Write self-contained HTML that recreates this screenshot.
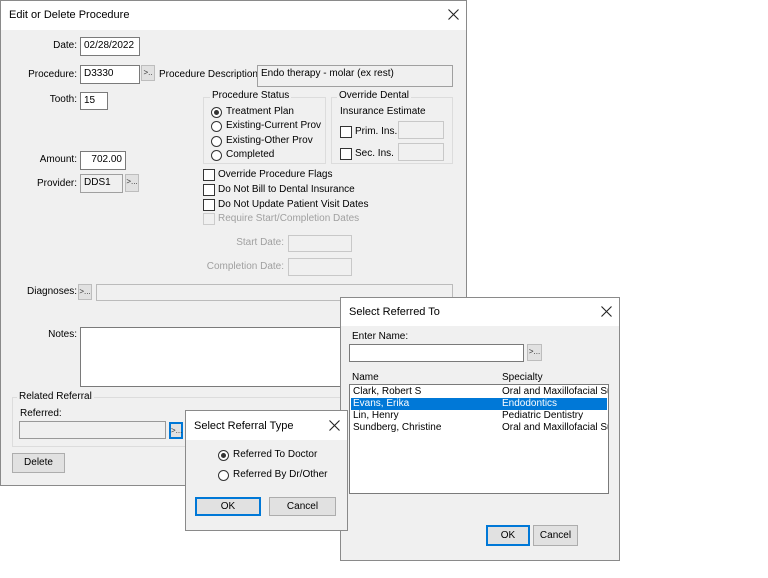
<!DOCTYPE html>
<html><head><meta charset="utf-8"><style>
*{box-sizing:border-box;margin:0;padding:0}
body{width:768px;height:578px;background:#fff;position:relative;overflow:hidden;font-family:"Liberation Sans",sans-serif;font-size:10px;color:#000}
.a{position:absolute;white-space:nowrap}
.win{position:absolute;background:#f0f0f0;border:1px solid #8a8a8a}
.tb{position:absolute;left:0;top:0;right:0;background:#fff}
.tt{position:absolute;font-size:11px}
.x{position:absolute;width:11px;height:11px}
.in{position:absolute;background:#fff;border:1px solid #7a7a7a;padding:2px 3px;line-height:12px}
.dis{position:absolute;background:#f0f0f0;border:1px solid #c8c8c8}
.bt{position:absolute;background:#e1e1e1;border:1px solid #adadadb0;font-size:8px;line-height:13px;text-align:center;color:#333}
.btn{position:absolute;background:#e1e1e1;border:1px solid #adadad;text-align:center;font-size:10px}
.blue{border:2px solid #0078d7}
.grp{position:absolute;border:1px solid #dcdcdc}
.gt{position:absolute;background:#f0f0f0;padding:0 2px;white-space:nowrap}
.r{position:absolute;width:11px;height:11px;border-radius:50%;border:1px solid #333;background:#fff}
.r.on::after{content:"";position:absolute;left:2px;top:2px;width:5px;height:5px;border-radius:50%;background:#333}
.c{position:absolute;width:12px;height:12px;border:1px solid #333;background:#fff}
.gray{color:#a0a0a0}
</style></head><body>

<!-- main window -->
<div class="win" style="left:0;top:0;width:467px;height:486px">
 <div class="tb" style="height:29px"></div>
 <div class="tt" style="left:8px;top:8px">Edit or Delete Procedure</div>
 <svg class="x" style="left:447px;top:8px" viewBox="0 0 11 11"><path d="M0.5 0.5L10.5 10.5M10.5 0.5L0.5 10.5" stroke="#222" stroke-width="1.1"/></svg>
</div>
<div class="a" style="right:691px;top:40px">Date:</div>
<div class="in" style="left:80px;top:37px;width:60px;height:19px">02/28/2022</div>
<div class="a" style="right:691px;top:69px">Procedure:</div>
<div class="in" style="left:80px;top:65px;width:60px;height:19px">D3330</div>
<div class="bt" style="left:141px;top:65px;width:14px;height:16px">&gt;..</div>
<div class="a" style="left:159px;top:69px">Procedure Description</div>
<div class="in" style="left:257px;top:65px;width:196px;height:22px;background:#f0f0f0;border-color:#a0a0a0">Endo therapy - molar (ex rest)</div>
<div class="a" style="right:691px;top:94px">Tooth:</div>
<div class="in" style="left:80px;top:92px;width:28px;height:18px">15</div>
<div class="a" style="right:691px;top:154px">Amount:</div>
<div class="in" style="left:80px;top:151px;width:46px;height:19px;text-align:right">702.00</div>
<div class="a" style="right:691px;top:178px">Provider:</div>
<div class="in" style="left:80px;top:174px;width:43px;height:19px;background:#f0f0f0;border-color:#a0a0a0">DDS1</div>
<div class="bt" style="left:125px;top:174px;width:14px;height:18px">&gt;...</div>

<div class="grp" style="left:203px;top:97px;width:123px;height:67px"></div>
<div class="gt" style="left:210px;top:90px">Procedure Status</div>
<div class="r on" style="left:211px;top:107px"></div><div class="a" style="left:226px;top:106px">Treatment Plan</div>
<div class="r" style="left:211px;top:121px"></div><div class="a" style="left:226px;top:120px">Existing-Current Prov</div>
<div class="r" style="left:211px;top:136px"></div><div class="a" style="left:226px;top:135px">Existing-Other Prov</div>
<div class="r" style="left:211px;top:150px"></div><div class="a" style="left:226px;top:149px">Completed</div>

<div class="grp" style="left:331px;top:97px;width:122px;height:67px"></div>
<div class="gt" style="left:337px;top:90px">Override Dental</div>
<div class="a" style="left:340px;top:106px">Insurance Estimate</div>
<div class="c" style="left:340px;top:126px"></div><div class="a" style="left:355px;top:126px">Prim. Ins.</div>
<div class="dis" style="left:398px;top:121px;width:46px;height:18px"></div>
<div class="c" style="left:340px;top:148px"></div><div class="a" style="left:355px;top:148px">Sec. Ins.</div>
<div class="dis" style="left:398px;top:143px;width:46px;height:18px"></div>

<div class="c" style="left:203px;top:169px"></div><div class="a" style="left:218px;top:169px">Override Procedure Flags</div>
<div class="c" style="left:203px;top:184px"></div><div class="a" style="left:218px;top:184px">Do Not Bill to Dental Insurance</div>
<div class="c" style="left:203px;top:199px"></div><div class="a" style="left:218px;top:199px">Do Not Update Patient Visit Dates</div>
<div class="c" style="left:203px;top:213px;border-color:#ccc;background:#f0f0f0"></div><div class="a gray" style="left:218px;top:213px">Require Start/Completion Dates</div>
<div class="a gray" style="right:484px;top:237px">Start Date:</div>
<div class="dis" style="left:288px;top:235px;width:64px;height:17px"></div>
<div class="a gray" style="right:484px;top:261px">Completion Date:</div>
<div class="dis" style="left:288px;top:258px;width:64px;height:18px"></div>

<div class="a" style="left:27px;top:286px">Diagnoses:</div>
<div class="bt" style="left:78px;top:284px;width:14px;height:16px">&gt;...</div>
<div class="dis" style="left:96px;top:284px;width:357px;height:17px;border-color:#bbb"></div>
<div class="a" style="right:691px;top:329px">Notes:</div>
<div class="in" style="left:80px;top:327px;width:270px;height:60px"></div>

<div class="grp" style="left:12px;top:397px;width:330px;height:50px"></div>
<div class="gt" style="left:17px;top:391px">Related Referral</div>
<div class="a" style="left:20px;top:408px">Referred:</div>
<div class="dis" style="left:19px;top:421px;width:147px;height:18px;border-color:#999"></div>
<div class="bt blue" style="left:169px;top:422px;width:14px;height:17px">&gt;...</div>
<div class="btn" style="left:12px;top:453px;width:53px;height:20px;line-height:18px">Delete</div>

<!-- Select Referred To -->
<div class="win" style="left:340px;top:297px;width:280px;height:264px">
 <div class="tb" style="height:28px"></div>
 <div class="tt" style="left:8px;top:8px">Select Referred To</div>
 <svg class="x" style="left:260px;top:8px" viewBox="0 0 11 11"><path d="M0.5 0.5L10.5 10.5M10.5 0.5L0.5 10.5" stroke="#222" stroke-width="1.1"/></svg>
</div>
<div class="a" style="left:352px;top:331px">Enter Name:</div>
<div class="in" style="left:349px;top:344px;width:175px;height:18px"></div>
<div class="bt" style="left:527px;top:344px;width:15px;height:17px">&gt;...</div>
<div class="a" style="left:352px;top:372px">Name</div>
<div class="a" style="left:502px;top:372px">Specialty</div>
<div class="in" style="left:349px;top:384px;width:260px;height:110px;padding:0;overflow:hidden">
 <div style="position:absolute;left:1px;top:13px;width:256px;height:12px;background:#0078d7"></div>
 <div class="a" style="left:3px;top:1px;line-height:12px">Clark, Robert S<br><span style="color:#fff">Evans, Erika</span><br>Lin, Henry<br>Sundberg, Christine</div>
 <div class="a" style="left:152px;top:1px;line-height:12px">Oral and Maxillofacial Su<br><span style="color:#fff">Endodontics</span><br>Pediatric Dentistry<br>Oral and Maxillofacial Su</div>
</div>
<div class="btn blue" style="left:486px;top:525px;width:44px;height:21px;line-height:17px">OK</div>
<div class="btn" style="left:533px;top:525px;width:45px;height:21px;line-height:19px">Cancel</div>

<!-- Select Referral Type -->
<div class="win" style="left:185px;top:410px;width:163px;height:121px">
 <div class="tb" style="height:29px"></div>
 <div class="tt" style="left:8px;top:9px">Select Referral Type</div>
 <svg class="x" style="left:143px;top:9px" viewBox="0 0 11 11"><path d="M0.5 0.5L10.5 10.5M10.5 0.5L0.5 10.5" stroke="#222" stroke-width="1.1"/></svg>
</div>
<div class="r on" style="left:218px;top:450px"></div><div class="a" style="left:233px;top:449px">Referred To Doctor</div>
<div class="r" style="left:218px;top:470px"></div><div class="a" style="left:233px;top:469px">Referred By Dr/Other</div>
<div class="btn blue" style="left:195px;top:497px;width:66px;height:19px;line-height:15px">OK</div>
<div class="btn" style="left:269px;top:497px;width:67px;height:19px;line-height:17px">Cancel</div>
</body></html>
